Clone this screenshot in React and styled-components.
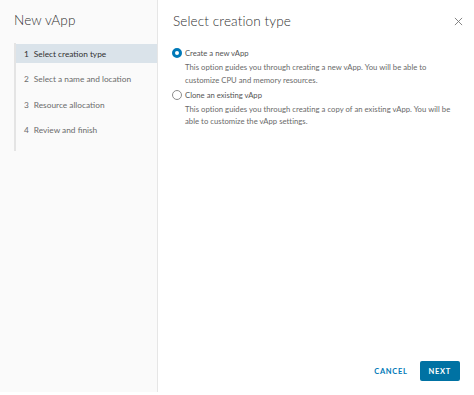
import styled, {createGlobalStyle} from "styled-components";

const Global = createGlobalStyle`
  html, body { margin: 0; padding: 0; background: #fff; }
  body { font-family: Lato, "Open Sans", sans-serif; color: #565656; }
`;

const Dialog = styled.div`
  display: flex;
  width: 474px;
  height: 395px;
  background: #fff;
`;

const Sidebar = styled.div`
  width: 157px;
  height: 392px;
  background: #fafafa;
  border-right: 1px solid #e6e6e6;
  display: flex;
  flex-direction: column;
`;

const SideTitle = styled.div`
  font-size: 13.6px;
  font-weight: 300;
  color: #313131;
  letter-spacing: 0.1px;
  padding: 12px 0 0 14px;
  height: 31px;
`;

const Steps = styled.div`
  margin-left: 14px;
  border-left: 2px solid #e4e4e4;
  display: flex;
  flex-direction: column;
  padding: 1px 0 5px;
`;

const Step = styled.div`
  height: 19px;
  margin-bottom: 6.6px;
  display: flex;
  align-items: center;
  padding-left: 8px;
  font-size: 8.3px;
  color: ${(p) => (p.active ? "#313131" : "#6b6b6b")};
  background: ${(p) => (p.active ? "#dae3ea" : "transparent")};
  span { margin-right: 5px; }
`;

const Main = styled.div`
  flex: 1;
  display: flex;
  flex-direction: column;
  padding: 12px 14px 14px 15px;
`;

const Header = styled.div`
  display: flex;
  justify-content: space-between;
  align-items: center;
  height: 18px;
  margin-bottom: 18px;
`;

const Title = styled.div`
  font-size: 13.6px;
  font-weight: 300;
  letter-spacing: 0.1px;
  color: #313131;
`;

const Close = styled.svg`
  width: 9px;
  height: 9px;
  margin-right: -3px;
`;

const Options = styled.div`
  flex: 1;
  display: flex;
  flex-direction: column;
  gap: 3px;
`;

const Option = styled.div`
  display: flex;
  flex-direction: column;
`;

const Label = styled.div`
  display: flex;
  align-items: center;
  font-size: 7.7px;
  color: #565656;
  height: 10px;
`;

const Radio = styled.span`
  box-sizing: border-box;
  width: 10px;
  height: 10px;
  border-radius: 50%;
  margin-right: 3px;
  margin-left: -1px;
  border: ${(p) => (p.checked ? "3.5px solid #0079b8" : "1px solid #8c8c8c")};
  background: #fff;
`;

const Desc = styled.div`
  padding-left: 12px;
  font-size: 7.7px;
  letter-spacing: 0.03px;
  line-height: 12.8px;
  color: #6a6a6a;
  margin-top: 3px;
`;

const Footer = styled.div`
  display: flex;
  justify-content: flex-end;
  align-items: center;
  gap: 10px;
`;

const Button = styled.button`
  font-family: Lato, sans-serif;
  font-weight: 700;
  font-size: 7.5px;
  letter-spacing: 0.7px;
  border: none;
  border-radius: 2px;
  height: 20px;
  padding: 0 ${(p) => (p.primary ? "9px" : "2px")};
  color: ${(p) => (p.primary ? "#fff" : "#0079b8")};
  background: ${(p) => (p.primary ? "#0072a3" : "transparent")};
  min-width: ${(p) => (p.primary ? "40px" : "0")};
`;

export default function App() {
  const steps = [
    "Select creation type",
    "Select a name and location",
    "Resource allocation",
    "Review and finish",
  ];
  return (
    <Dialog>
      <Global />
      <Sidebar>
        <SideTitle>New vApp</SideTitle>
        <Steps>
          {steps.map((s, i) => (
            <Step key={i} active={i === 0}>
              <span>{i + 1}</span>
              {s}
            </Step>
          ))}
        </Steps>
      </Sidebar>
      <Main>
        <Header>
          <Title>Select creation type</Title>
          <Close viewBox="0 0 10 10">
            <path d="M1 1L9 9M9 1L1 9" stroke="#777" strokeWidth="1" />
          </Close>
        </Header>
        <Options>
          <Option>
            <Label><Radio checked />Create a new vApp</Label>
            <Desc>
              This option guides you through creating a new vApp. You will be able to
              <br />
              customize CPU and memory resources.
            </Desc>
          </Option>
          <Option>
            <Label><Radio />Clone an existing vApp</Label>
            <Desc>
              This option guides you through creating a copy of an existing vApp. You will be
              <br />
              able to customize the vApp settings.
            </Desc>
          </Option>
        </Options>
        <Footer>
          <Button>CANCEL</Button>
          <Button primary>NEXT</Button>
        </Footer>
      </Main>
    </Dialog>
  );
}
